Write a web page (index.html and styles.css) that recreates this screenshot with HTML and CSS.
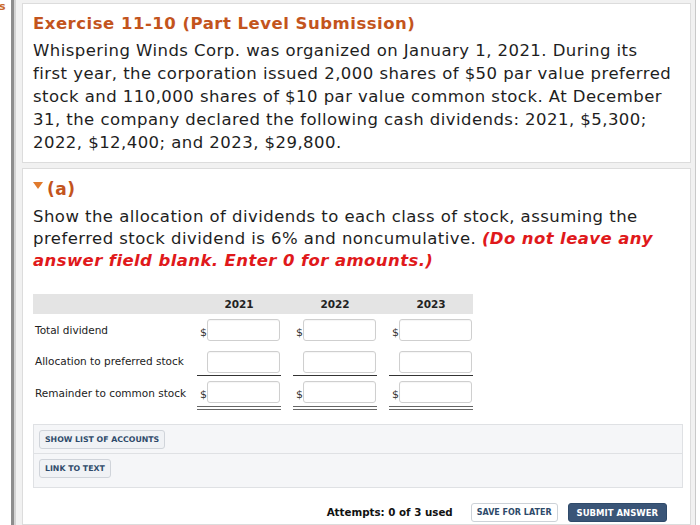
FILE: index.html
```html
<!DOCTYPE html>
<html>
<head>
<meta charset="utf-8">
<link rel="stylesheet" href="styles.css">
</head>
<body>
<div class="frame">
  <div class="edge"><span class="frag">s</span></div>
  <div class="main">
    <section class="card intro">
      <h1 class="title">Exercise 11-10 (Part Level Submission)</h1>
      <p class="body-text intro-text">Whispering Winds Corp. was organized on January 1, 2021. During its<br>first year, the corporation issued 2,000 shares of $50 par value preferred<br>stock and 110,000 shares of $10 par value common stock. At December<br>31, the company declared the following cash dividends: 2021, $5,300;<br>2022, $12,400; and 2023, $29,800.</p>
    </section>
    <section class="card part">
      <div class="part-head"><span class="tri"></span><span class="part-label">(a)</span></div>
      <p class="body-text">Show the allocation of dividends to each class of stock, assuming the preferred stock dividend is 6% and noncumulative. <em class="warn">(Do not leave any answer field blank. Enter 0 for amounts.)</em></p>

      <div class="table">
        <div class="trow thead">
          <div></div><div class="yr">2021</div><div class="yr">2022</div><div class="yr">2023</div>
        </div>
        <div class="trow r1">
          <div class="lbl">Total dividend</div>
          <div class="cell"><span class="cur">$</span><span class="inp"></span></div>
          <div class="cell"><span class="cur">$</span><span class="inp"></span></div>
          <div class="cell"><span class="cur">$</span><span class="inp"></span></div>
        </div>
        <div class="trow r2">
          <div class="lbl">Allocation to preferred stock</div>
          <div class="cell single"><span class="cur"></span><span class="inp"></span></div>
          <div class="cell single"><span class="cur"></span><span class="inp"></span></div>
          <div class="cell single"><span class="cur"></span><span class="inp"></span></div>
        </div>
        <div class="trow r3">
          <div class="lbl">Remainder to common stock</div>
          <div class="cell double"><span class="cur">$</span><span class="inp"></span></div>
          <div class="cell double"><span class="cur">$</span><span class="inp"></span></div>
          <div class="cell double"><span class="cur">$</span><span class="inp"></span></div>
        </div>
      </div>

      <div class="tools">
        <div class="tool-row"><span class="tbtn">SHOW LIST OF ACCOUNTS</span></div>
        <div class="tool-row"><span class="tbtn">LINK TO TEXT</span></div>
      </div>

      <div class="actions">
        <span class="attempts">Attempts: 0 of 3 used</span>
        <span class="btn save">SAVE FOR LATER</span>
        <span class="btn submit">SUBMIT ANSWER</span>
      </div>
    </section>
  </div>
</div>
</body>
</html>
```
FILE: styles.css
```css
html, body {
  margin: 0;
  padding: 0;
  background: #ffffff;
  font-family: "DejaVu Sans", Verdana, sans-serif;
  color: #222;
  height: 525px;
  overflow: hidden;
}
.frame {
  display: flex;
  height: 525px;
}
.edge {
  width: 11px;
  flex: none;
  overflow: hidden;
}
.frag {
  display: block;
  color: #c9682b;
  font-size: 11px;
  font-weight: bold;
  line-height: 11px;
  margin: 1px 0 0 -1px;
}
.main {
  width: 669px;
  flex: none;
  border-left: 3px solid #8d8d8d;
  border-right: 1px solid #c9c9c9;
  box-shadow: inset 2px 0 0 #d3d3d3;
  background: #f1f1f1;
  padding: 3px 4px 0 8px;
  display: flex;
  flex-direction: column;
  gap: 5px;
}
.card {
  background: #fff;
  border: 1px solid #dcdcdc;
}
.intro {
  padding: 9px 10px 8px 10px;
}
.title {
  margin: 0 0 4px 0;
  font-size: 16.5px;
  letter-spacing: 0.5px;
  line-height: 22px;
  font-weight: bold;
  color: #c3541d;
}
.body-text {
  margin: 0;
  font-size: 16.5px;
  letter-spacing: 0.45px;
  line-height: 23px;
  color: #1e1e1e;
}
.intro-text {
  white-space: nowrap;
}
.part {
  flex: 1;
  padding: 9px 7px 0 10px;
}
.part-head {
  display: flex;
  align-items: center;
  gap: 4px;
  height: 22px;
  margin-bottom: 6px;
}
.tri {
  width: 0;
  height: 0;
  border-left: 5px solid transparent;
  border-right: 5px solid transparent;
  border-top: 7px solid #e07a2c;
  margin-top: -7px;
}
.part-label {
  font-weight: bold;
  font-size: 17px;
  letter-spacing: 0.5px;
  color: #c3541d;
}
.part .body-text {
  line-height: 22px;
  letter-spacing: 0.45px;
}
.warn {
  color: #e0191b;
  font-weight: bold;
  font-style: italic;
  letter-spacing: 0.4px;
}
.table {
  margin-top: 22px;
  width: 440px;
}
.trow {
  display: grid;
  grid-template-columns: 152px 84px 84px 84px;
  column-gap: 12px;
  align-items: end;
}
.thead {
  background: #e4e4e4;
  height: 20px;
  align-items: center;
}
.yr {
  text-align: center;
  font-weight: bold;
  font-size: 10.5px;
  color: #222;
}
.lbl {
  font-size: 10.5px;
  color: #222;
  padding-left: 2px;
  white-space: nowrap;
  align-self: center;
}
.cell {
  display: flex;
  align-items: flex-end;
}
.cur {
  width: 7px;
  padding-left: 3px;
  font-size: 11px;
  line-height: 11px;
  color: #333;
  margin-bottom: 3px;
}
.inp {
  width: 71px;
  height: 20px;
  border: 1px solid #cfcfcf;
  border-radius: 3px;
  background: #fff;
  box-shadow: inset 0 1px 1px rgba(0,0,0,0.04);
}
.r1 { padding-top: 5px; padding-bottom: 3px; }
.r2 { padding-top: 7px; }
.r2 .lbl { padding-bottom: 5px; }
.single {
  padding-bottom: 2px;
  border-bottom: 1.5px solid #333;
}
.r3 { padding-top: 5px; }
.r3 .lbl { padding-bottom: 5px; }
.double {
  padding-bottom: 3px;
  border-bottom: 4px double #666;
}
.tools {
  margin-top: 14px;
  width: 648px;
  background: #f5f6f8;
  border: 1px solid #dfe1e4;
}
.tool-row {
  display: flex;
  padding: 5px 5px 4px 5px;
}
.tool-row + .tool-row {
  border-top: 1px solid #dfe1e4;
  padding-bottom: 9px;
}
.tbtn {
  display: block;
  font-size: 7.8px;
  font-weight: bold;
  color: #2e4a6a;
  background: #f0f2f5;
  border: 1px solid #d0d4da;
  border-radius: 3px;
  padding: 4px 5px 3px 5px;
  line-height: 10px;
}
.actions {
  display: flex;
  justify-content: flex-end;
  align-items: center;
  margin-top: 15px;
  padding-right: 16px;
  width: 634px;
  gap: 10px;
  height: 18px;
}
.attempts {
  font-size: 10.3px;
  font-weight: bold;
  color: #111;
  margin-right: 8px;
}
.btn {
  display: block;
  font-size: 8px;
  font-weight: bold;
  border-radius: 3px;
  padding: 4px 6px 3px;
  line-height: 10px;
}
.save {
  color: #2e4a6a;
  background: #fff;
  border: 1px solid #cdd2d8;
  padding: 4px 5px 3px;
}
.submit {
  color: #fff;
  background: #3a5577;
  border: 1px solid #2f4a6a;
  font-size: 8.5px;
  padding: 4px 8px 3px;
}
```
